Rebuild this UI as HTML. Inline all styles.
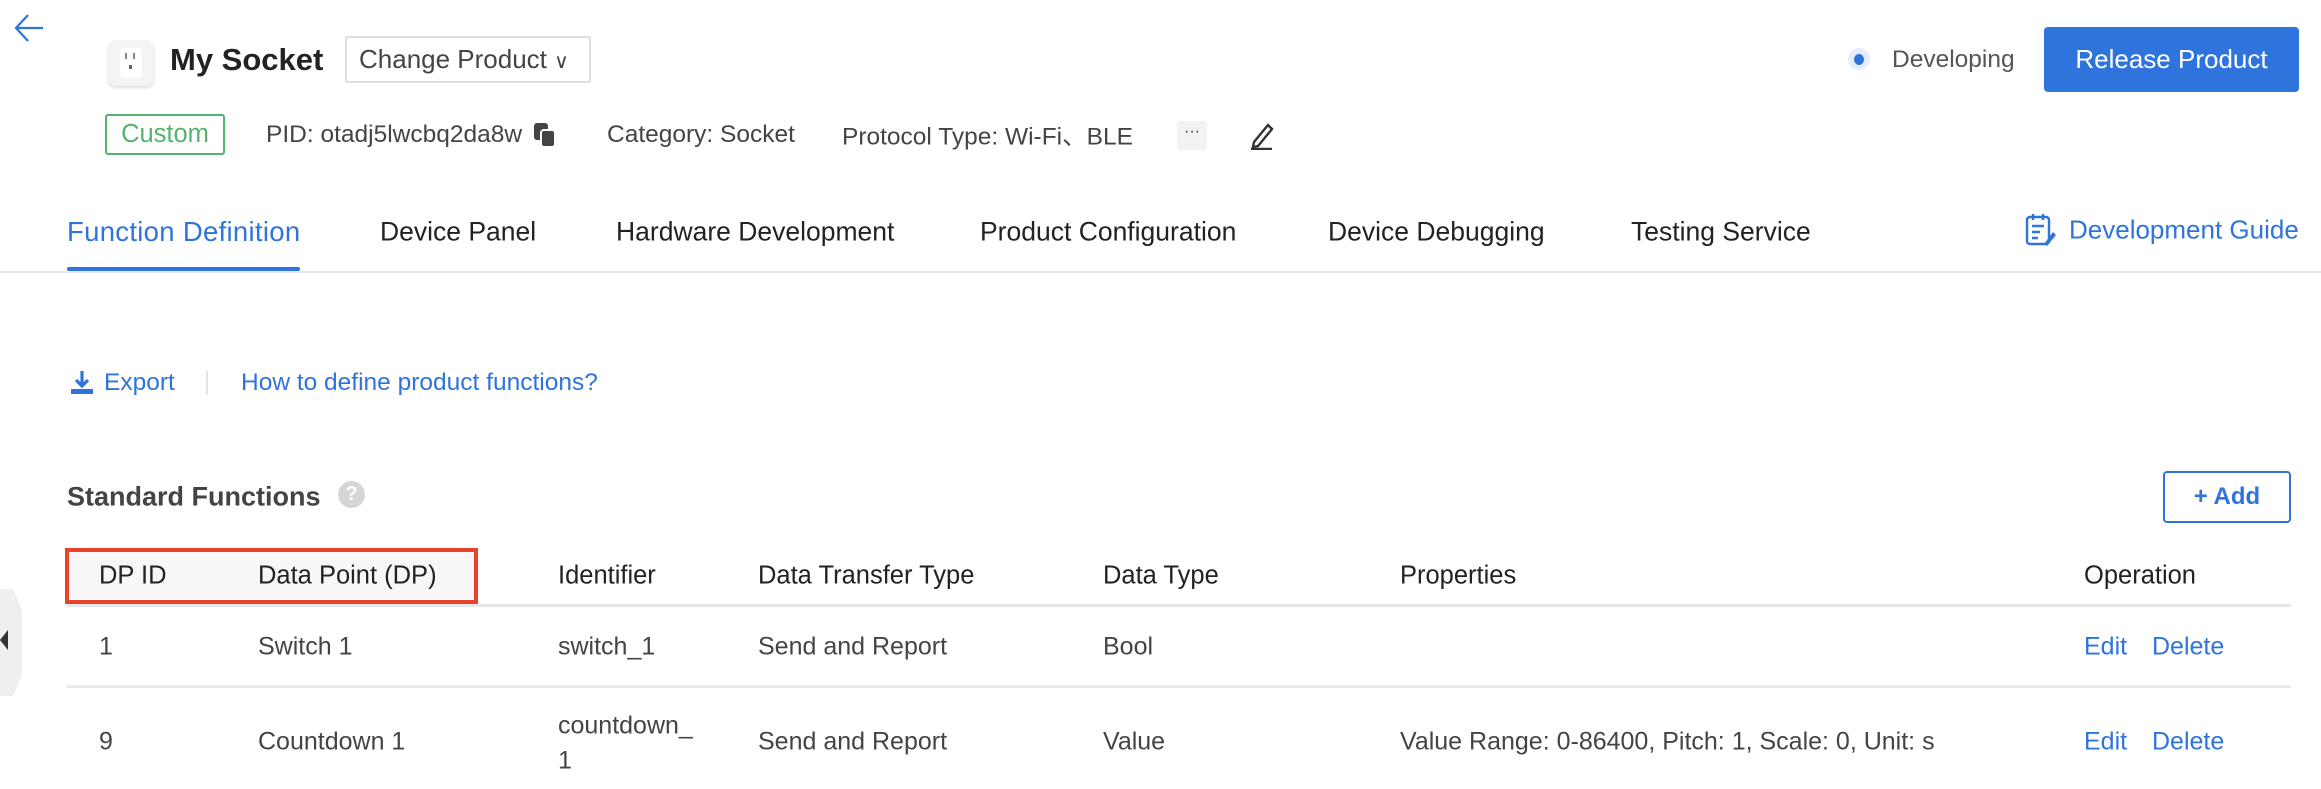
<!DOCTYPE html>
<html><head><meta charset="utf-8"><style>
*{margin:0;padding:0;box-sizing:border-box}
body{width:2321px;height:789px;background:#fff;font-family:"Liberation Sans",Arial,sans-serif;color:#333;position:relative;overflow:hidden}
.a{position:absolute;white-space:nowrap}
.blue{color:#2f74dc}
.c{transform:translateY(-50%)}
.t{font-size:26.5px;color:#222}
.h{font-size:25.5px;color:#222}
.r{font-size:25px;color:#444}
</style></head><body>
<svg class="a" style="left:12px;top:12px" width="32" height="32" viewBox="0 0 32 32"><path d="M16 3 L4 16 L16 29 M4 16 H31" fill="none" stroke="#2f74dc" stroke-width="2.2"/></svg>
<div class="a" style="left:108px;top:40px;width:46px;height:46px;border-radius:8px;background:#f4f4f4;box-shadow:0 2px 3px #ddd"><div style="position:absolute;left:12px;top:8px;width:22px;height:30px;background:#fff;border-radius:4px"></div><div style="position:absolute;left:17px;top:13px;width:2px;height:6px;background:#888"></div><div style="position:absolute;left:25px;top:13px;width:2px;height:6px;background:#888"></div><div style="position:absolute;left:21px;top:25px;width:3px;height:4px;background:#666"></div></div>
<div class="a c" style="left:170px;top:60px;font-size:31px;font-weight:bold;color:#222">My Socket</div>
<div class="a" style="left:345px;top:36px;width:246px;height:47px;border:2px solid #ddd;border-radius:3px;font-size:26px;line-height:43px;padding-left:12px;color:#444">Change Product <span style="font-size:20px">&#8744;</span></div>
<div class="a" style="left:1848px;top:48px;width:22px;height:22px;border-radius:50%;background:#e3edfb"></div>
<div class="a" style="left:1854px;top:54px;width:10px;height:11px;border-radius:50%;background:#2f74dc"></div>
<div class="a c" style="left:1892px;top:60px;font-size:24.5px;color:#555">Developing</div>
<div class="a" style="left:2044px;top:27px;width:255px;height:65px;background:#2f74dc;border-radius:4px;color:#fff;font-size:26px;line-height:65px;text-align:center">Release Product</div>

<div class="a" style="left:105px;top:114px;width:120px;height:41px;border:2px solid #52b46f;border-radius:3px;color:#52b46f;font-size:25.5px;line-height:37px;text-align:center">Custom</div>
<div class="a c" style="left:266px;top:135px;font-size:24.5px;color:#444">PID: otadj5lwcbq2da8w</div>
<svg class="a" style="left:532px;top:121px" width="26" height="28" viewBox="0 0 26 28"><rect x="2" y="2" width="14" height="17" rx="3" fill="#444"/><rect x="9" y="9" width="14" height="17" rx="3" fill="#444" stroke="#fff" stroke-width="2"/></svg>
<div class="a c" style="left:607px;top:135px;font-size:24.5px;color:#444">Category: Socket</div>
<div class="a c" style="left:842px;top:135px;font-size:24.5px;color:#444">Protocol Type: Wi-Fi、BLE</div>
<div class="a" style="left:1177px;top:121px;width:30px;height:29px;background:#f2f2f2;border-radius:3px;font-size:16px;text-align:center;line-height:22px;color:#333">···</div>
<svg class="a" style="left:1248px;top:120px" width="28" height="30" viewBox="0 0 28 30"><path d="M6 22 L20 5 L24 9 L10 26 L5 27 Z" fill="none" stroke="#333" stroke-width="2.4"/><path d="M3 29 H24" stroke="#333" stroke-width="2.4"/></svg>

<div class="a c blue" style="left:67px;top:232px;font-size:27.5px;letter-spacing:0.3px">Function Definition</div>
<div class="a c t" style="left:380px;top:232px">Device Panel</div>
<div class="a c t" style="left:616px;top:232px">Hardware Development</div>
<div class="a c t" style="left:980px;top:232px">Product Configuration</div>
<div class="a c t" style="left:1328px;top:232px">Device Debugging</div>
<div class="a c t" style="left:1631px;top:232px">Testing Service</div>
<svg class="a" style="left:2024px;top:212px" width="34" height="36" viewBox="0 0 34 36"><rect x="3" y="5" width="22" height="27" rx="3" fill="none" stroke="#2f74dc" stroke-width="2.4"/><path d="M9 2v6M19 2v6M8 14h12M8 20h8M8 26h6" stroke="#2f74dc" stroke-width="2.4"/><path d="M20 32 L29 20 L32 23 L23 34 Z" fill="#2f74dc"/></svg>
<div class="a c blue" style="left:2069px;top:230px;font-size:26px">Development Guide</div>
<div class="a" style="left:67px;top:267px;width:233px;height:4px;background:#2f74dc;border-radius:2px"></div>
<div class="a" style="left:0;top:271px;width:2321px;height:2px;background:#e8e8e8"></div>

<svg class="a" style="left:69px;top:370px" width="26" height="26" viewBox="0 0 26 26"><path d="M13 1v14M7 10l6 6 6-6" fill="none" stroke="#2f74dc" stroke-width="3.2"/><rect x="2" y="19" width="22" height="5" fill="#2f74dc"/></svg>
<div class="a c blue" style="left:104px;top:383px;font-size:24.5px">Export</div>
<div class="a" style="left:206px;top:371px;width:2px;height:24px;background:#e4e4e4"></div>
<div class="a c blue" style="left:241px;top:383px;font-size:24.5px">How to define product functions?</div>

<div class="a c" style="left:67px;top:497px;font-size:27px;color:#444;font-weight:bold">Standard Functions</div>
<div class="a" style="left:338px;top:481px;width:27px;height:27px;border-radius:50%;background:#d6d6d6;color:#fff;font-size:20px;font-weight:bold;text-align:center;line-height:27px">?</div>
<div class="a" style="left:2163px;top:471px;width:128px;height:52px;border:2px solid #2f74dc;border-radius:4px;color:#2f74dc;font-size:24px;font-weight:bold;text-align:center;line-height:48px">+ Add</div>

<div class="a" style="left:69px;top:552px;width:405px;height:47px;background:#f7f7f7"></div>
<div class="a" style="left:65px;top:548px;width:413px;height:56px;border:4px solid #e8412c"></div>
<div class="a c h" style="left:99px;top:576px">DP ID</div>
<div class="a c h" style="left:258px;top:576px">Data Point (DP)</div>
<div class="a c h" style="left:558px;top:576px">Identifier</div>
<div class="a c h" style="left:758px;top:576px">Data Transfer Type</div>
<div class="a c h" style="left:1103px;top:576px">Data Type</div>
<div class="a c h" style="left:1400px;top:576px">Properties</div>
<div class="a c h" style="left:2084px;top:576px">Operation</div>
<div class="a" style="left:67px;top:604px;width:2224px;height:3px;background:#e8e8e8"></div>

<div class="a c r" style="left:99px;top:647px">1</div>
<div class="a c r" style="left:258px;top:647px">Switch 1</div>
<div class="a c r" style="left:558px;top:647px">switch_1</div>
<div class="a c r" style="left:758px;top:647px">Send and Report</div>
<div class="a c r" style="left:1103px;top:647px">Bool</div>
<div class="a c blue" style="left:2084px;top:647px;font-size:25px">Edit</div>
<div class="a c blue" style="left:2152px;top:647px;font-size:25px">Delete</div>
<div class="a" style="left:67px;top:685px;width:2224px;height:3px;background:#eaeaea"></div>

<div class="a c r" style="left:99px;top:742px">9</div>
<div class="a c r" style="left:258px;top:742px">Countdown 1</div>
<div class="a c r" style="left:558px;top:726px">countdown_</div>
<div class="a c r" style="left:558px;top:761px">1</div>
<div class="a c r" style="left:758px;top:742px">Send and Report</div>
<div class="a c r" style="left:1103px;top:742px">Value</div>
<div class="a c r" style="left:1400px;top:742px">Value Range: 0-86400, Pitch: 1, Scale: 0, Unit: s</div>
<div class="a c blue" style="left:2084px;top:742px;font-size:25px">Edit</div>
<div class="a c blue" style="left:2152px;top:742px;font-size:25px">Delete</div>

<div class="a" style="left:0;top:589px;width:22px;height:107px;background:#eeeff1;clip-path:polygon(0 0,60% 0,100% 20%,100% 80%,60% 100%,0 100%)"></div>
<div class="a" style="left:0;top:630px;width:0;height:0;border-top:10px solid transparent;border-bottom:10px solid transparent;border-right:8px solid #333"></div>
</body></html>
